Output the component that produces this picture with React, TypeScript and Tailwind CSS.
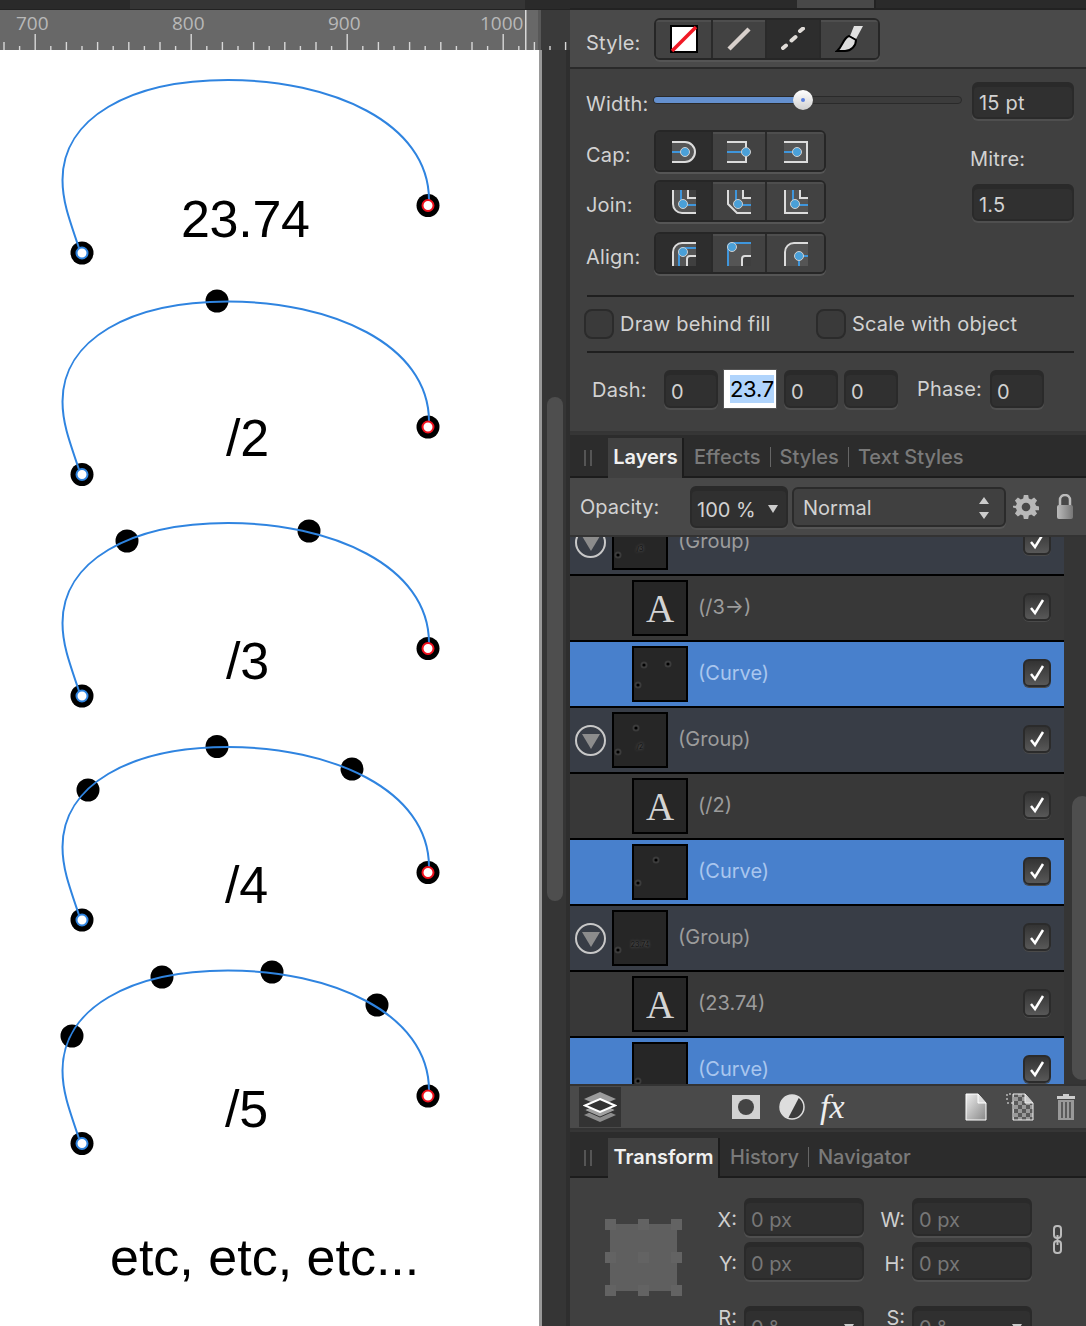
import React from "react";

const FONT = { fontFamily: "'Inter','Liberation Sans',sans-serif" };

function Curve({ y, dots }: { y: number; dots: [number, number][] }) {
  return (
    <g transform={`translate(0 ${y})`}>
      {dots.map(([cx, cy], i) => (
        <circle key={i} cx={cx} cy={cy} r="11.5" fill="#000" />
      ))}
      <circle cx="82" cy="253" r="11.5" fill="#000" />
      <circle cx="428" cy="205.5" r="11.5" fill="#000" />
      <path d="M79 248 C68 216 62.5 200 62.5 180 C62.5 118 130 80 228 80 C330 80 429 122 429 200" fill="none" stroke="#2f84e0" strokeWidth="2" />
      <circle cx="82" cy="253" r="5.5" fill="#fff" stroke="#2f84e0" strokeWidth="2" />
      <circle cx="428" cy="205.5" r="5.5" fill="#fff" stroke="#f0101c" strokeWidth="2" />
    </g>
  );
}

function Ruler() {
  const ticks: React.ReactNode[] = [];
  for (let i = -2; i < 35; i++) {
    const x = 34.5 + i * 15.6;
    const major = ((i % 10) + 10) % 10 === 0;
    const mid = ((i % 2) + 2) % 2 === 0;
    const top = major ? 34 : mid ? 42 : 46;
    ticks.push(<rect key={i} x={x} y={top} width="1.4" height={50 - top} fill="#d8d8d8" />);
  }
  return (
    <svg width="570" height="40" viewBox="0 10 570 40" className="absolute left-0 top-0">
      {ticks}
      <rect x="525" y="10" width="1.5" height="40" fill="#d8d8d8" />
    </svg>
  );
}

function Cell({ on, w, children }: { on?: boolean; w: string; children?: React.ReactNode }) {
  return (
    <div className={`${w} flex items-center justify-center border-r-2 border-[#2a2a2a] last:border-r-0 ${on ? "bg-[#2d2d2d]" : "bg-[#424242] shadow-[inset_0_2px_0_#4e4e4e]"}`}>
      {children}
    </div>
  );
}

function Seg({ children, className = "" }: { children: React.ReactNode; className?: string }) {
  return (
    <div className={`flex rounded-md border-2 border-[#262626] overflow-hidden shadow-[0_2px_0_#555] ${className}`}>
      {children}
    </div>
  );
}

function Field({ className = "", text = "", dim, children }: { className?: string; text?: string; dim?: boolean; children?: React.ReactNode }) {
  return (
    <div className={`flex items-center rounded-md bg-[#303030] border-2 border-[#2a2a2a] shadow-[inset_0_3px_0_#2a2a2a,0_2px_0_#4f4f4f] pl-[5px] pt-[5px] text-[20px] whitespace-nowrap ${dim ? "text-[#777]" : "text-[#d2d2d2]"} ${className}`}>
      {text}
      {children}
    </div>
  );
}

const Dot = ({ x, y }: { x: number; y: number }) => (
  <g>
    <circle cx={x} cy={y} r="3.5" fill="#3c3c3c" />
    <circle cx={x} cy={y} r="1.6" fill="#000" />
  </g>
);

function IconBase({ children }: { children: React.ReactNode }) {
  return <svg width="24" height="24" viewBox="0 0 24 24" fill="none" className="mt-[2px]">{children}</svg>;
}
const W = "#dcdcdc";
const B = "#3f96dc";
const Knob = ({ x, y }: { x: number; y: number }) => <circle cx={x} cy={y} r="4.5" fill="#4aa0d8" stroke="#d0d0d0" strokeWidth="1" />;

const Cap1 = () => (
  <IconBase>
    <path d="M0 2H13A10 10 0 0 1 13 22H0Z" fill="#555" />
    <path d="M0 2H13A10 10 0 0 1 13 22H0" stroke={W} strokeWidth="2" />
    <path d="M0 12H13" stroke={B} strokeWidth="2" /><Knob x={13} y={12} />
  </IconBase>
);
const Cap2 = () => (
  <IconBase>
    <path d="M0 2H19V22H0Z" fill="#555" />
    <path d="M0 2H19V22H0" stroke={W} strokeWidth="2" />
    <path d="M0 12H19" stroke={B} strokeWidth="2" /><Knob x={19} y={12} />
  </IconBase>
);
const Cap3 = () => (
  <IconBase>
    <path d="M0 2H23V22H0Z" fill="#555" />
    <path d="M0 2H23V22H0" stroke={W} strokeWidth="2" />
    <path d="M0 12H13" stroke={B} strokeWidth="2" /><Knob x={13} y={12} />
  </IconBase>
);
function Join({ outer }: { outer: string }) {
  return (
    <IconBase>
      <path d={`${outer}H24V0Z`} fill="#555" />
      <path d="M16 0V8H24V0Z" fill="#3f3f3f" />
      <path d={outer} stroke={W} strokeWidth="2" />
      <path d="M16 0V8H24" stroke={W} strokeWidth="2" />
      <path d="M9 0V15H24" stroke={B} strokeWidth="2" /><Knob x={11} y={14} />
    </IconBase>
  );
}
const Join1 = () => <Join outer="M1 0V14A9 9 0 0 0 10 23H24" />;
const Join2 = () => <Join outer="M1 0V14L10 23H24" />;
const Join3 = () => <Join outer="M1 0V23H24" />;
const Align1 = () => (
  <IconBase>
    <path d="M1 24V10A9 9 0 0 1 10 1H24V24Z" fill="#555" />
    <path d="M15 24V17A3 3 0 0 1 18 14H24V24Z" fill="#3f3f3f" />
    <path d="M1 24V10A9 9 0 0 1 10 1H24" stroke={W} strokeWidth="2" />
    <path d="M7 24V10A4 4 0 0 1 11 6H24" stroke={B} strokeWidth="2" />
    <path d="M15 24V17A3 3 0 0 1 18 14H24" stroke={W} strokeWidth="2" /><Knob x={11} y={10} />
  </IconBase>
);
const Align2 = () => (
  <IconBase>
    <path d="M1 24V1H24V24Z" fill="#555" />
    <path d="M15 24V17A3 3 0 0 1 18 14H24V24Z" fill="#3f3f3f" />
    <path d="M1 24V6A4 4 0 0 1 5 1H24" stroke={B} strokeWidth="2" />
    <path d="M15 24V17A3 3 0 0 1 18 14H24" stroke={W} strokeWidth="2" /><Knob x={5} y={5} />
  </IconBase>
);
const Align3 = () => (
  <IconBase>
    <path d="M1 24V10A9 9 0 0 1 10 1H24V24Z" fill="#555" />
    <path d="M1 24V10A9 9 0 0 1 10 1H24" stroke={W} strokeWidth="2" />
    <path d="M15 24V14H24" stroke={B} strokeWidth="2" /><Knob x={15} y={14} />
  </IconBase>
);

function Check() {
  return (
    <div className="mb-[2px] flex h-[28px] w-[28px] shrink-0 items-center justify-center rounded-md border-2 border-[#2b2b2b] bg-gradient-to-b from-[#333] to-[#585858] shadow-[0_1px_0_#4a4a4a]">
      <svg width="18" height="18" viewBox="0 0 18 18" fill="none"><path d="M3 10L7 15L15 2" stroke="#fff" strokeWidth="2.5" /></svg>
    </div>
  );
}

function Thumb({ kind, dots = [], mini }: { kind: "a" | "c"; dots?: [number, number][]; mini?: string }) {
  return (
    <div className="relative flex h-[56px] w-[56px] shrink-0 items-center justify-center border-2 border-black bg-[#262626]">
      {kind === "a" ? (
        <span className="text-[39px] leading-none text-[#d4d4d4]" style={{ fontFamily: "'Liberation Serif',serif" }}>A</span>
      ) : (
        <svg width="52" height="52" viewBox="0 0 52 52" className="absolute left-0 top-0">
          {dots.map(([x, y], i) => <Dot key={i} x={x} y={y} />)}
        </svg>
      )}
      {mini && <span className="absolute left-[14px] top-[29px] w-[24px] text-center text-[7px] leading-none text-[#111] [text-shadow:0_0_3px_#888]">{mini}</span>}
    </div>
  );
}

function Row({ type, label, dots, mini, kind, className = "" }: { type: "group" | "text" | "curve"; label: string; dots?: [number, number][]; mini?: string; kind: "a" | "c"; className?: string }) {
  const bg = type === "group" ? "bg-[#383d46]" : type === "curve" ? "bg-[#4880cc]" : "bg-[#383838]";
  return (
    <div className={`flex h-[66px] items-center border-b-2 border-black pr-[13px] ${bg} ${className}`}>
      {type === "group" ? (
        <div className="ml-[5px] flex h-[31px] w-[31px] shrink-0 items-center justify-center rounded-full border-2 border-[#c8c8c8]">
          <svg width="18" height="15" viewBox="0 0 18 15" className="mt-[2px]"><path d="M0 0H18L9 15Z" fill="#8c8c8c" /></svg>
        </div>
      ) : (
        <div className="w-[62px] shrink-0" />
      )}
      <div className={type === "group" ? "ml-[6px]" : ""}>
        <Thumb kind={kind} dots={dots} mini={mini} />
      </div>
      <span className={`mb-[2px] ml-[10px] flex-1 text-[20px] ${type === "curve" ? "text-[#a9c6ee]" : "text-[#9c9c9c]"}`}>{label}</span>
      <Check />
    </div>
  );
}

function TabBar({ h, active, tabW, tabs }: { h: string; active: string; tabW: string; tabs: string[] }) {
  return (
    <div className={`flex ${h} shrink-0 items-end border-b-2 border-[#1c1c1c] bg-[#2c2c2c] shadow-[inset_0_2px_0_#363636]`}>
      <div className="mb-[10px] ml-[14px] flex w-[24px] gap-[4px]">
        <div className="h-[16px] w-[2px] bg-[#555]" />
        <div className="h-[16px] w-[2px] bg-[#555]" />
      </div>
      <div className={`${tabW} flex h-[40px] -mb-[2px] items-center justify-center border-r-2 border-[#1c1c1c] bg-[#404040] pb-[2px] pl-[1px] text-[20px] font-semibold text-[#f0f0f0]`}>{active}</div>
      <div className="flex h-[38px] items-center pl-[10px] pb-[1px] text-[20px] font-medium text-[#7a7a7a]">
        {tabs.map((t, i) => (
          <React.Fragment key={t}>
            {i > 0 && <div className="mx-[9px] h-[20px] w-[1px] bg-[#666]" />}
            <span>{t}</span>
          </React.Fragment>
        ))}
      </div>
    </div>
  );
}

const Tri = () => (
  <svg width="10" height="8" viewBox="0 0 10 8" className="ml-auto mr-[8px]"><path d="M0 0H10L5 8Z" fill="#ccc" /></svg>
);

export default function App() {
  return (
    <div className="flex h-[1326px] w-[1086px] overflow-hidden bg-[#404040]" style={FONT}>
      {/* Left: document view */}
      <div className="flex w-[570px] shrink-0 flex-col bg-[#353535]">
        <div className="flex h-[10px] border-b-[1px] border-[#222]">
          <div className="w-[130px] bg-[#2a2a2a]" />
          <div className="w-[395px] bg-[#353535]" />
          <div className="flex-1 bg-[#2a2a2a]" />
        </div>
        <div className="relative h-[40px] shrink-0 bg-[#3a3a3a]">
          <div className="h-[40px] w-[541px] border-r-[3px] border-[#585858] bg-[#686868]" />
          <Ruler />
          {[["700", 16], ["800", 172], ["900", 328], ["1000", 480]].map(([t, x]) => (
            <span key={t} className="absolute top-[1px] text-[19px] leading-[24px] text-[#b8b8b8]" style={{ left: x as number, fontFamily: "'Open Sans',sans-serif" }}>{t}</span>
          ))}
        </div>
        <div className="flex min-h-0 flex-1">
          <div className="relative w-[539px] shrink-0 bg-white">
            <svg width="540" height="1276" viewBox="0 50 540 1276" className="absolute left-0 top-0">
              <Curve y={0} dots={[]} />
              <Curve y={221.5} dots={[[217, 79.5]]} />
              <Curve y={443} dots={[[127, 98], [309, 88]]} />
              <Curve y={667} dots={[[88, 123], [217, 79.5], [352, 102]]} />
              <Curve y={890.5} dots={[[72, 145.5], [162, 86.5], [272, 81.5], [377, 114.5]]} />
            </svg>
            {[
              ["23.74", 181, 139],
              ["/2", 226, 358],
              ["/3", 226, 581],
              ["/4", 225, 805],
              ["/5", 225, 1029],
            ].map(([t, x, y]) => (
              <span key={t as string} className="absolute text-[52px] leading-[60px] tracking-[-0.3px] text-black" style={{ left: x as number, top: y as number, fontFamily: "'Liberation Sans',sans-serif" }}>{t}</span>
            ))}
            <span className="absolute left-[110px] top-[1177px] text-[52px] leading-[60px] text-black" style={{ fontFamily: "'Liberation Sans',sans-serif" }}>etc, etc, etc...</span>
          </div>
          <div className="relative flex-1 border-l-[3px] border-r-[4px] border-l-[#999] border-r-[#2e2e2e] bg-[#353535]">
            <div className="absolute left-[5px] top-[347px] h-[504px] w-[16px] rounded-full bg-[#4e4e4e]" />
          </div>
        </div>
      </div>

      {/* Right: panels */}
      <div className="flex min-w-0 flex-1 flex-col">
        <div className="flex h-[10px] border-b-2 border-[#222]">
          <div className="w-[227px] bg-[#2a2a2a]" />
          <div className="w-[77px] bg-[#484848]" />
          <div className="flex-1 border-l-2 border-[#222] bg-[#2a2a2a]" />
        </div>

        {/* Style row */}
        <div className="flex h-[59px] shrink-0 items-center border-b-2 border-[#2a2a2a] bg-[#4a4a4a] pl-[16px] text-[20px] tracking-[0.2px] text-[#d2d2d2]">
          <span className="w-[68px] pt-[8px]">Style:</span>
          <Seg className="h-[42px]">
            <Cell w="w-[57px]">
              <svg width="28" height="28" viewBox="0 0 28 28"><rect x="1" y="1" width="26" height="26" fill="#fff" stroke="#000" strokeWidth="2" /><path d="M2 26L26 2" stroke="#f01824" strokeWidth="3.5" /></svg>
            </Cell>
            <Cell w="w-[54px]">
              <svg width="24" height="24" viewBox="0 0 24 24"><path d="M2 22L22 2" stroke="#d8d0cc" strokeWidth="4.5" /></svg>
            </Cell>
            <Cell on w="w-[54px]">
              <svg width="24" height="24" viewBox="0 0 24 24"><path d="M2 21L5 18.5M10.5 13.5L14.5 10M19 4L22 1.5" stroke="#e0dcd8" strokeWidth="4" strokeLinecap="round" /></svg>
            </Cell>
            <Cell w="w-[57px]">
              <svg width="30" height="30" viewBox="0 0 30 30">
                <path d="M19 2H28L21 15L15 12Z" fill="#e0e0e0" />
                <path d="M14 12C8 14 8 22 2 27H10C16 27 21 22 21 16Z" fill="#ddd" stroke="#000" strokeWidth="2" />
              </svg>
            </Cell>
          </Seg>
        </div>

        {/* Stroke panel */}
        <div className="flex h-[364px] shrink-0 flex-col border-b-2 border-[#353535] text-[20px] tracking-[0.2px] text-[#d2d2d2]">
          <div className="flex">
            <div className="w-[398px] pl-[16px]">
              <div className="flex h-[52px] w-[392px] items-center pt-[14px]">
                <span className="w-[67px] shrink-0 pt-[3px]">Width:</span>
                <div className="relative mb-[5px] h-[8px] w-[309px] rounded-full border border-[#2a2a2a] bg-[#3c3c3c]">
                  <div className="h-full w-[150px] rounded-full bg-[#6490cf]" />
                  <div className="absolute left-[139px] top-[-7px] flex h-[20px] w-[20px] items-center justify-center rounded-full bg-gradient-to-b from-white to-[#d0d0d0]">
                    <div className="h-[4px] w-[4px] rounded-full bg-[#5a80e0]" />
                  </div>
                </div>
              </div>
              {[
                ["Cap:", [Cap1, Cap2, Cap3], "mt-[9px]"],
                ["Join:", [Join1, Join2, Join3], "mt-[8px]"],
                ["Align:", [Align1, Align2, Align3], "mt-[10px]"],
              ].map(([l, icons, m]) => (
                <div key={l as string} className={`flex items-center ${m as string}`}>
                  <span className="w-[68px] pt-[8px]">{l as string}</span>
                  <Seg className="h-[42px]">
                    {(icons as React.FC[]).map((I, i) => (
                      <Cell key={i} on={i === 0} w={i === 1 ? "w-[54px]" : "w-[57px]"}><I /></Cell>
                    ))}
                  </Seg>
                </div>
              ))}
            </div>
            <div className="flex flex-col pl-[4px] pt-[13px]">
              <Field className="h-[37px] w-[102px]" text="15 pt" />
              <span className="-ml-[2px] mt-[27px] leading-[26px]">Mitre:</span>
              <Field className="mt-[12px] h-[37px] w-[102px]" text="1.5" />
            </div>
          </div>

          <div className="ml-[17px] mt-[21px] h-[2px] w-[487px] bg-[#1f1f1f]" />
          <div className="flex h-[54px] items-center pl-[14px]">
            <div className="h-[30px] w-[30px] rounded-lg border-2 border-[#2b2b2b] bg-[#3a3a3a]" />
            <span className="ml-[6px] w-[196px]">Draw behind fill</span>
            <div className="h-[30px] w-[30px] rounded-lg border-2 border-[#2b2b2b] bg-[#3a3a3a]" />
            <span className="ml-[6px]">Scale with object</span>
          </div>
          <div className="ml-[17px] h-[2px] w-[487px] bg-[#1f1f1f]" />

          <div className="mt-[17px] flex items-center pl-[22px]">
            <span className="w-[72px] pt-[1px]">Dash:</span>
            <Field className="h-[38px] w-[54px]" text="0" />
            <div className="ml-[6px] flex h-[38px] w-[52px] items-center bg-white pl-[6px] shadow-[0_0_0_1px_#555]">
              <span className="w-[44px] bg-[#b0d4fc] text-[22px] leading-[28px] tracking-[-0.3px] text-black">23.7</span>
            </div>
            <Field className="ml-[8px] h-[38px] w-[54px]" text="0" />
            <Field className="ml-[6px] h-[38px] w-[54px]" text="0" />
            <span className="ml-[19px] w-[73px]">Phase:</span>
            <Field className="h-[38px] w-[54px]" text="0" />
          </div>
        </div>

        <TabBar h="h-[45px]" active="Layers" tabW="w-[76px]" tabs={["Effects", "Styles", "Text Styles"]} />

        {/* Opacity row */}
        <div className="relative flex h-[59px] shrink-0 items-center border-b-2 border-[#333] bg-[#484848] pl-[10px] text-[20px] text-[#d2d2d2]">
          <span className="w-[110px]">Opacity:</span>
          <Field className="h-[42px] w-[98px]">
            <span className="pt-[2px]">100 %</span>
            <Tri />
          </Field>
          <div className="ml-[4px] flex h-[40px] w-[214px] items-center rounded-md border-2 border-[#2b2b2b] bg-[#404040] pl-[9px] pt-[2px] shadow-[0_2px_0_#555]">
            Normal
            <svg width="10" height="22" viewBox="0 0 10 22" className="ml-auto mr-[15px]"><path d="M5 0L10 7H0ZM5 22L0 15H10Z" fill="#ccc" /></svg>
          </div>
          <svg width="26" height="26" viewBox="0 0 24 24" className="ml-[7px]">
            <path fillRule="evenodd" d="M10 1H14L14.6 4.2L16.8 5.1L19.5 3.3L22.2 6L20.4 8.7L21.3 10.9L24 11.5V12.5V15L21.3 15.1L20.4 15.3L22.2 18L19.5 20.7L16.8 18.9L14.6 19.8L14 23H10L9.4 19.8L7.2 18.9L4.5 20.7L1.8 18L3.6 15.3L2.7 13.1L0 12.5V10.9L2.7 10.9L3.6 8.7L1.8 6L4.5 3.3L7.2 5.1L9.4 4.2ZM12 8A4 4 0 1 0 12 16A4 4 0 1 0 12 8Z" fill="#b8b8b8" />
          </svg>
          <svg width="18" height="26" viewBox="0 0 18 26" className="ml-[17px]">
            <defs>
              <linearGradient id="lock" x1="0" y1="0" x2="1" y2="0"><stop offset="0" stopColor="#bbb" /><stop offset="1" stopColor="#777" /></linearGradient>
            </defs>
            <path d="M4 12V6A5 5 0 0 1 14 6V12" fill="none" stroke="#bbb" strokeWidth="2.5" />
            <rect x="1" y="11" width="16" height="14" rx="2" fill="url(#lock)" />
          </svg>
        </div>

        {/* Layers list */}
        <div className="flex h-[547px] shrink-0 overflow-hidden bg-[#353535]">
          <div className="w-[494px] shrink-0">
            <Row className="-mt-[27px]" type="group" kind="c" label="(Group)" dots={[[4, 39]]} mini="/3" />
            <Row type="text" kind="a" label="(/3→)" />
            <Row type="curve" kind="c" label="(Curve)" dots={[[10, 17], [34, 16], [4, 37]]} />
            <Row type="group" kind="c" label="(Group)" dots={[[22, 14], [4, 38]]} mini="/2" />
            <Row type="text" kind="a" label="(/2)" />
            <Row type="curve" kind="c" label="(Curve)" dots={[[22, 14], [4, 37]]} />
            <Row type="group" kind="c" label="(Group)" dots={[[4, 38]]} mini="23.74" />
            <Row type="text" kind="a" label="(23.74)" />
            <Row type="curve" kind="c" label="(Curve)" dots={[[4, 37]]} />
          </div>
          <div className="relative flex-1">
            <div className="absolute left-[8px] top-[259px] h-[284px] w-[20px] rounded-full bg-[#4e4e4e]" />
          </div>
        </div>

        {/* Toolbar */}
        <div className="flex h-[46px] shrink-0 items-center border-y-2 border-[#333] bg-[#4a4a4a] pl-[9px]">
          <div className="flex h-[40px] w-[42px] items-center justify-center bg-[#333]">
            <svg width="34" height="32" viewBox="0 0 34 32">
              <path d="M17 17L33 24L17 31L1 24Z" fill="#8c8c8c" />
              <path d="M17 12L33 19L17 26L1 19Z" fill="#a0a0a0" stroke="#333" strokeWidth="1" />
              <path d="M17 1L33 8L17 15L1 8Z" fill="#9a9a9a" />
              <path d="M17 8L32 14.5L17 21L2 14.5Z" fill="#333" stroke="#fff" strokeWidth="2" />
            </svg>
          </div>
          <svg width="28" height="24" viewBox="0 0 28 24" className="ml-[111px]">
            <rect width="28" height="24" fill="#d2d2d2" />
            <circle cx="14" cy="12" r="8" fill="#444" />
          </svg>
          <svg width="26" height="26" viewBox="0 0 26 26" className="ml-[19px]">
            <circle cx="13" cy="13" r="12" fill="#ddd" />
            <path d="M20 3.5A12 12 0 0 1 9 24.5Z" fill="#3c3c3c" />
            <circle cx="13" cy="13" r="12" fill="none" stroke="#ddd" strokeWidth="1.5" />
          </svg>
          <span className="ml-[15px] w-[28px] text-[34px] italic leading-none text-[#eee]" style={{ fontFamily: "'Liberation Serif',serif" }}>fx</span>
          <svg width="22" height="28" viewBox="0 0 22 28" className="ml-[117px]">
            <defs>
              <linearGradient id="pg" x1="0" y1="0" x2="1" y2="1"><stop offset="0" stopColor="#eee" /><stop offset="1" stopColor="#888" /></linearGradient>
            </defs>
            <path d="M1 1H13L21 10V27H1Z" fill="url(#pg)" stroke="#fff" strokeWidth="1" />
            <path d="M13 1V10H21" fill="#ddd" stroke="#fff" strokeWidth="1" />
          </svg>
          <svg width="28" height="28" viewBox="0 0 28 28" className="ml-[19px]">
            <defs>
              <pattern id="chk" width="8" height="8" patternUnits="userSpaceOnUse">
                <rect width="8" height="8" fill="#999" />
                <rect width="4" height="4" fill="#5a5a5a" />
                <rect x="4" y="4" width="4" height="4" fill="#5a5a5a" />
              </pattern>
            </defs>
            <path d="M7 1H19L27 10V27H7Z" fill="url(#chk)" stroke="#eee" strokeWidth="1" />
            <path d="M19 1V10H27" fill="#ccc" stroke="#eee" strokeWidth="1" />
            <path d="M1 1V9M1 10H7M3 1H7" stroke="#eee" strokeWidth="1" strokeDasharray="2 2" fill="none" />
          </svg>
          <svg width="20" height="28" viewBox="0 0 20 28" className="ml-[22px]">
            <path d="M7 3V1H13V3M1 3H19V6H1Z" fill="#ccc" />
            <path d="M2 7H18V27H2Z" fill="#999" />
            <path d="M6 9V25M10 9V25M14 9V25" stroke="#444" strokeWidth="1.5" />
          </svg>
        </div>

        <TabBar h="h-[48px]" active="Transform" tabW="w-[112px]" tabs={["History", "Navigator"]} />

        {/* Transform */}
        <div className="relative flex min-h-0 flex-1 overflow-hidden pt-[20px] text-[20px] text-[#cfcfcf]">
          <div className="ml-[35px] mt-[21px] w-[77px] shrink-0">
            <svg width="77" height="77" viewBox="0 0 77 77">
              <rect x="5" y="5" width="67" height="67" fill="#5f5f5f" />
              {[0, 33, 66].flatMap((x) => [0, 33, 66].map((y) => <rect key={`${x}-${y}`} x={x} y={y} width="11" height="11" fill="#636363" />))}
            </svg>
          </div>
          <div className="ml-[36px] grid h-[170px] grid-cols-[26px_120px_22px_26px_120px] grid-rows-[38px_38px_38px] gap-y-[6px]">
            <span className="self-center justify-self-end pr-[7px] pt-[6px]">X:</span>
            <Field dim className="h-[38px]" text="0 px" />
            <span />
            <span className="self-center justify-self-end pr-[7px] pt-[6px]">W:</span>
            <Field dim className="h-[38px]" text="0 px" />
            <span className="self-center justify-self-end pr-[7px] pt-[6px]">Y:</span>
            <Field dim className="h-[38px]" text="0 px" />
            <span />
            <span className="self-center justify-self-end pr-[7px] pt-[6px]">H:</span>
            <Field dim className="h-[38px]" text="0 px" />
            <span className="mt-[20px] self-center justify-self-end pr-[7px] pt-[6px]">R:</span>
            <Field dim className="mt-[20px] h-[38px]" text="0 °"><Tri /></Field>
            <span />
            <span className="mt-[20px] self-center justify-self-end pr-[7px] pt-[6px]">S:</span>
            <Field dim className="mt-[20px] h-[38px]" text="0 °"><Tri /></Field>
          </div>
          <svg width="10" height="30" viewBox="0 0 10 30" className="ml-[21px] mt-[27px]">
            <rect x="1" y="1" width="7" height="12" rx="3" fill="none" stroke="#bbb" strokeWidth="2" />
            <rect x="1" y="16" width="7" height="12" rx="3" fill="none" stroke="#bbb" strokeWidth="2" />
            <path d="M4.5 10V20" stroke="#bbb" strokeWidth="2" />
          </svg>
        </div>
      </div>
    </div>
  );
}
